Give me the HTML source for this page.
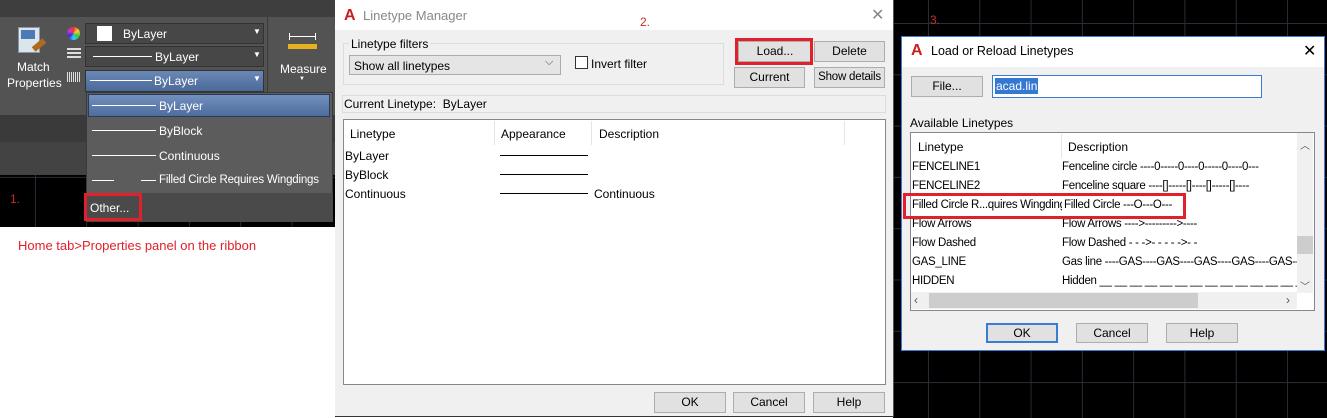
<!DOCTYPE html>
<html><head><style>
*{margin:0;padding:0;box-sizing:border-box}
body{width:1327px;height:418px;position:relative;overflow:hidden;background:#fff;font-family:"Liberation Sans",sans-serif;font-size:12px;color:#000}
.a{position:absolute;white-space:nowrap}
.grid{background-color:#000;background-image:linear-gradient(90deg,#2a2c36 1px,transparent 1px),linear-gradient(#2a2c36 1px,transparent 1px);background-size:51.3px 51.3px;background-position:907px 23px}
.btn{position:absolute;background:#e1e1e1;border:1px solid #adadad;text-align:center;line-height:19px}
.w{color:#fff}
.ln{position:absolute;height:1px;background:#fff}
.bl{position:absolute;height:1px;background:#000}
.red{position:absolute;border:3px solid #e0202a}
.r{font-size:11.5px;letter-spacing:-0.2px}
</style></head><body>
<div class="a grid" style="left:893px;top:0;width:434px;height:418px"></div>
<div class="a" style="left:930px;top:13px;color:#c0302a;font-size:12px">3.</div>
<div class="a grid" style="left:0;top:0;width:335px;height:227px"></div>
<div class="a" style="left:0;top:0;width:335px;height:17px;background:#3e3e3e"></div>
<div class="a" style="left:0;top:17px;width:335px;height:98px;background:#535353"></div>
<div class="a" style="left:0;top:115px;width:335px;height:27px;background:#3a3a3a"></div>
<div class="a" style="left:0;top:142px;width:335px;height:33px;background:#434343"></div>
<div class="a" style="left:267px;top:17px;width:1px;height:98px;background:#3a3a3a"></div>
<div class="a" style="left:18px;top:27px;width:22px;height:26px;background:#dce4ec;border:1px solid #8898a8"></div>
<div class="a" style="left:21px;top:30px;width:14px;height:9px;background:#4a7ab8"></div>
<div class="a" style="left:32px;top:42px;width:14px;height:6px;background:#b06a20;transform:rotate(-40deg)"></div>
<div class="a w" style="left:17px;top:60px;font-size:12px">Match</div>
<div class="a w" style="left:7px;top:76px;font-size:12px">Properties</div>
<div class="a" style="left:67px;top:27px;width:13px;height:13px;border-radius:50%;background:conic-gradient(#e33,#fc3,#3c3,#3cf,#33c,#c3c,#e33)"></div>
<div class="a" style="left:67px;top:48px;width:14px;height:10px;background:repeating-linear-gradient(#ddd 0 2px,transparent 2px 4px)"></div>
<div class="a" style="left:67px;top:72px;width:14px;height:10px;background:repeating-linear-gradient(90deg,#ddd 0 1px,transparent 1px 2px)"></div>
<div class="a" style="left:85px;top:23px;width:179px;height:21px;background:#474747;border:1px solid #333"></div>
<div class="a" style="left:97px;top:26px;width:15px;height:15px;background:#fff"></div>
<div class="a w" style="left:123px;top:27px">ByLayer</div>
<div class="a w" style="left:253px;top:27px;font-size:8px">▼</div>
<div class="a" style="left:85px;top:46px;width:179px;height:21px;background:#474747;border:1px solid #333"></div>
<div class="ln" style="left:93px;top:56px;width:59px"></div>
<div class="a w" style="left:155px;top:50px">ByLayer</div>
<div class="a w" style="left:253px;top:50px;font-size:8px">▼</div>
<div class="a" style="left:85px;top:70px;width:179px;height:22px;background:linear-gradient(#6b88b5,#4a6a9a);border:1px solid #333"></div>
<div class="ln" style="left:90px;top:80px;width:62px"></div>
<div class="a w" style="left:154px;top:74px">ByLayer</div>
<div class="a w" style="left:253px;top:74px;font-size:8px">▼</div>
<div class="a" style="left:289px;top:36px;width:27px;height:1px;background:#fff"></div>
<div class="a" style="left:289px;top:33px;width:1px;height:7px;background:#fff"></div>
<div class="a" style="left:315px;top:33px;width:1px;height:7px;background:#fff"></div>
<div class="a" style="left:288px;top:44px;width:29px;height:5px;background:#e8b020"></div>
<div class="a w" style="left:280px;top:62px">Measure</div>
<div class="a w" style="left:299px;top:76px;font-size:6px">▼</div>
<div class="a" style="left:86px;top:92px;width:247px;height:130px;background:#5c5c5c;border:1px solid #3a3a3a"></div>
<div class="a" style="left:86px;top:193px;width:247px;height:29px;background:#4a4a4a"></div>
<div class="a" style="left:88px;top:94px;width:242px;height:23px;background:linear-gradient(#7390bd,#4d6d9e);border:1px solid #2a3a5a"></div>
<div class="ln" style="left:92px;top:105px;width:64px"></div><div class="a w" style="left:159px;top:99px">ByLayer</div>
<div class="ln" style="left:92px;top:130px;width:64px"></div><div class="a w" style="left:159px;top:124px">ByBlock</div>
<div class="ln" style="left:92px;top:155px;width:64px"></div><div class="a w" style="left:159px;top:149px">Continuous</div>
<div class="ln" style="left:92px;top:180px;width:22px"></div><div class="ln" style="left:141px;top:180px;width:15px"></div><div class="a w r" style="left:159px;top:174px">Filled Circle Requires Wingdings</div>
<div class="a w" style="left:90px;top:201px">Other...</div>
<div class="red" style="left:84px;top:193px;width:58px;height:28px"></div>
<div class="a" style="left:10px;top:192px;color:#d02828">1.</div>
<div class="a" style="left:18px;top:238px;color:#e0202a;font-size:13px">Home tab&gt;Properties panel on the ribbon</div>
<div class="a" style="left:335px;top:0;width:559px;height:417px;background:#f0f0f0;border-right:1px solid #555;border-bottom:1px solid #333"></div>
<div class="a" style="left:335px;top:0;width:558px;height:30px;background:#fff"></div>
<div class="a" style="left:344px;top:7px;color:#c82020;font-weight:bold;font-size:16px">A</div>
<div class="a" style="left:363px;top:8px;color:#888;font-size:13px">Linetype Manager</div>
<div class="a" style="left:871px;top:5px;color:#888;font-size:16px">✕</div>
<div class="a" style="left:640px;top:15px;color:#d02828">2.</div>
<div class="a" style="left:343px;top:43px;width:381px;height:42px;border:1px solid #dcdcdc"></div>
<div class="a" style="left:349px;top:37px;background:#f0f0f0;padding:0 2px">Linetype filters</div>
<div class="a" style="left:349px;top:55px;width:212px;height:20px;background:#e5e5e5;border:1px solid #acacac;padding:3px 4px">Show all linetypes</div>
<div class="a" style="left:545px;top:56px;font-size:11px;color:#444">⌵</div>
<div class="a" style="left:575px;top:56px;width:13px;height:13px;background:#fff;border:1px solid #333"></div>
<div class="a" style="left:591px;top:57px">Invert filter</div>
<div class="btn" style="left:738px;top:41px;width:74px;height:21px">Load...</div>
<div class="red" style="left:735px;top:38px;width:78px;height:27px"></div>
<div class="btn" style="left:814px;top:41px;width:71px;height:21px">Delete</div>
<div class="btn" style="left:734px;top:67px;width:71px;height:21px">Current</div>
<div class="btn r" style="left:814px;top:67px;width:71px;height:21px">Show details</div>
<div class="a" style="left:342px;top:95px;width:544px;height:18px;border:1px solid #dcdcdc;padding:1px 1px">Current Linetype:&nbsp; ByLayer</div>
<div class="a" style="left:343px;top:119px;width:543px;height:266px;background:#fff;border:1px solid #828790"></div>
<div class="a" style="left:494px;top:121px;width:1px;height:24px;background:#e5e5e5"></div>
<div class="a" style="left:591px;top:121px;width:1px;height:24px;background:#e5e5e5"></div>
<div class="a" style="left:844px;top:121px;width:1px;height:24px;background:#e5e5e5"></div>
<div class="a" style="left:350px;top:127px">Linetype</div>
<div class="a" style="left:501px;top:127px">Appearance</div>
<div class="a" style="left:599px;top:127px">Description</div>
<div class="a" style="left:345px;top:149px">ByLayer</div><div class="bl" style="left:500px;top:155px;width:88px"></div>
<div class="a" style="left:345px;top:168px">ByBlock</div><div class="bl" style="left:500px;top:174px;width:88px"></div>
<div class="a" style="left:345px;top:187px">Continuous</div><div class="bl" style="left:500px;top:193px;width:88px"></div>
<div class="a" style="left:594px;top:187px">Continuous</div>
<div class="btn" style="left:654px;top:392px;width:72px;height:21px">OK</div>
<div class="btn" style="left:733px;top:392px;width:72px;height:21px">Cancel</div>
<div class="btn" style="left:813px;top:392px;width:72px;height:21px">Help</div>
<div class="a" style="left:901px;top:36px;width:424px;height:315px;background:#f0f0f0;border:1px solid #3a7bd5"></div>
<div class="a" style="left:902px;top:37px;width:422px;height:30px;background:#fff"></div>
<div class="a" style="left:911px;top:42px;color:#c82020;font-weight:bold;font-size:16px">A</div>
<div class="a" style="left:931px;top:44px;font-size:12.5px">Load or Reload Linetypes</div>
<div class="a" style="left:1303px;top:41px;font-size:16px">✕</div>
<div class="btn" style="left:911px;top:76px;width:72px;height:21px">File...</div>
<div class="a" style="left:992px;top:75px;width:270px;height:23px;background:#fff;border:1px solid #3a7bd5"></div>
<div class="a" style="left:995px;top:78px;background:#3478d4;color:#fff;padding:1px 1px">acad.lin</div>
<div class="a" style="left:910px;top:116px">Available Linetypes</div>
<div class="a" style="left:910px;top:132px;width:405px;height:179px;background:#fff;border:1px solid #828790"></div>
<div class="a" style="left:1061px;top:134px;width:1px;height:24px;background:#e5e5e5"></div>
<div class="a" style="left:918px;top:140px">Linetype</div>
<div class="a" style="left:1068px;top:140px">Description</div>
<div class="a" style="left:911px;top:133px;width:386px;height:160px;overflow:hidden;font-size:11.5px;letter-spacing:-0.3px">
<div class="a" style="left:1px;top:28px">FENCELINE1</div><div class="a" style="left:151px;top:28px">Fenceline circle ----0-----0----0-----0----0---</div>
<div class="a" style="left:1px;top:47px">FENCELINE2</div><div class="a" style="left:151px;top:47px">Fenceline square ----[]-----[]----[]-----[]----</div>
<div class="a" style="left:1px;top:66px;width:150px;overflow:hidden">Filled Circle R...quires Wingdings</div><div class="a" style="left:153px;top:66px">Filled Circle ---O---O---</div>
<div class="a" style="left:1px;top:85px">Flow Arrows</div><div class="a" style="left:151px;top:85px">Flow Arrows ----&gt;---------&gt;----</div>
<div class="a" style="left:1px;top:104px">Flow Dashed</div><div class="a" style="left:151px;top:104px">Flow Dashed - - -&gt;- - - - -&gt;- -</div>
<div class="a" style="left:1px;top:123px">GAS_LINE</div><div class="a" style="left:151px;top:123px">Gas line ----GAS----GAS----GAS----GAS----GAS---</div>
<div class="a" style="left:1px;top:142px">HIDDEN</div><div class="a" style="left:151px;top:142px">Hidden __ __ __ __ __ __ __ __ __ __ __ __ __ __ __ __ __</div>
</div>
<div class="a" style="left:1297px;top:133px;width:16px;height:160px;background:#f0f0f0"></div>
<div class="a" style="left:1297px;top:236px;width:16px;height:18px;background:#cdcdcd"></div>
<div class="a" style="left:1300px;top:137px;font-size:10px;color:#555">︿</div>
<div class="a" style="left:1300px;top:278px;font-size:10px;color:#555">﹀</div>
<div class="a" style="left:911px;top:292px;width:386px;height:17px;background:#f0f0f0"></div>
<div class="a" style="left:929px;top:293px;width:269px;height:15px;background:#cdcdcd"></div>
<div class="a" style="left:914px;top:293px;color:#555">‹</div>
<div class="a" style="left:1286px;top:293px;color:#555">›</div>
<div class="red" style="left:903px;top:193px;width:283px;height:26px"></div>
<div class="btn" style="left:986px;top:323px;width:72px;height:20px;border:2px solid #3a7bd5;line-height:16px">OK</div>
<div class="btn" style="left:1076px;top:323px;width:72px;height:20px">Cancel</div>
<div class="btn" style="left:1166px;top:323px;width:72px;height:20px">Help</div>
</body></html>
